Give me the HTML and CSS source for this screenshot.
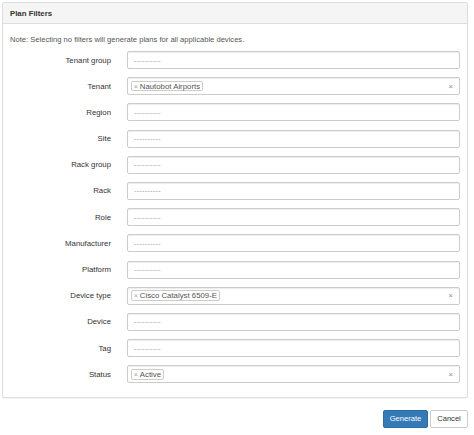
FILE: index.html
```html
<!DOCTYPE html>
<html>
<head>
<meta charset="utf-8">
<link rel="stylesheet" href="styles.css">
</head>
<body>
<div class="page">
  <div class="panel">
    <div class="panel-heading">Plan Filters</div>
    <div class="panel-body">
      <p class="note">Note: Selecting no filters will generate plans for all applicable devices.</p>
      <div class="form">
        <div class="row"><label>Tenant group</label><div class="control"><span class="ph">----------</span></div></div>
        <div class="row"><label>Tenant</label><div class="control"><span class="chip"><span class="x">×</span>Nautobot Airports</span><span class="clear">×</span></div></div>
        <div class="row"><label>Region</label><div class="control"><span class="ph">----------</span></div></div>
        <div class="row"><label>Site</label><div class="control"><span class="ph">----------</span></div></div>
        <div class="row"><label>Rack group</label><div class="control"><span class="ph">----------</span></div></div>
        <div class="row"><label>Rack</label><div class="control"><span class="ph">----------</span></div></div>
        <div class="row"><label>Role</label><div class="control"><span class="ph">----------</span></div></div>
        <div class="row"><label>Manufacturer</label><div class="control"><span class="ph">----------</span></div></div>
        <div class="row"><label>Platform</label><div class="control"><span class="ph">----------</span></div></div>
        <div class="row"><label>Device type</label><div class="control"><span class="chip"><span class="x">×</span>Cisco Catalyst 6509-E</span><span class="clear">×</span></div></div>
        <div class="row"><label>Device</label><div class="control"><span class="ph">----------</span></div></div>
        <div class="row"><label>Tag</label><div class="control"><span class="ph">----------</span></div></div>
        <div class="row"><label>Status</label><div class="control"><span class="chip"><span class="x">×</span>Active</span><span class="clear">×</span></div></div>
      </div>
    </div>
  </div>
  <div class="actions">
    <button class="btn btn-primary">Generate</button>
    <button class="btn btn-default">Cancel</button>
  </div>
</div>
</body>
</html>
```
FILE: styles.css
```css
html, body {
  margin: 0;
  padding: 0;
  background: #fff;
}
body {
  font-family: "Liberation Sans", Arial, Helvetica, sans-serif;
  font-size: 7.8px;
  color: #333;
}
.page {
  padding: 2px 6px 0 2px;
}
.panel {
  border: 1px solid #ddd;
  border-radius: 2px;
  box-shadow: 0 1px 1px rgba(0,0,0,0.05);
}
.panel-heading {
  background: #f5f5f5;
  border-bottom: 1px solid #ddd;
  height: 20px;
  line-height: 21px;
  padding: 0 7px;
  font-weight: bold;
  color: #333;
}
.panel-body {
  padding: 10px 7px 14px 7px;
}
.note {
  margin: 1px 0 0 0;
  height: 10px;
  line-height: 10px;
  font-size: 7.6px;
  color: #555;
}
.form {
  display: flex;
  flex-direction: column;
  gap: 8.2px;
  margin-top: 6px;
}
.row {
  display: grid;
  grid-template-columns: 101px 1fr;
  column-gap: 16px;
  align-items: center;
}
.row label {
  text-align: right;
  color: #333;
}
.control {
  height: 18px;
  box-sizing: border-box;
  border: 1px solid #ccc;
  border-radius: 2px;
  box-shadow: inset 0 1px 1px rgba(0,0,0,0.075);
  display: flex;
  align-items: center;
  padding: 0 3px 0 3px;
  position: relative;
}
.ph {
  color: #aaa;
  font-size: 8px;
  padding-left: 3px;
}
.chip {
  display: inline-flex;
  align-items: center;
  height: 10.5px;
  box-sizing: border-box;
  border: 1px solid #ccc;
  border-radius: 2px;
  background: #fff;
  padding: 0 2px;
  color: #555;
}
.chip .x {
  color: #999;
  font-size: 6.5px;
  margin-right: 2px;
}
.clear {
  margin-left: auto;
  color: #888;
  font-size: 7.5px;
  padding-right: 3px;
}
.actions {
  display: flex;
  justify-content: flex-end;
  gap: 2px;
  margin-top: 12px;
}
.btn {
  font-family: inherit;
  font-size: 7.6px;
  height: 18px;
  box-sizing: border-box;
  border-radius: 2px;
  padding: 0 4px;
  margin: 0;
  line-height: 16px;
}
.btn-primary {
  background: #337ab7;
  border: 1px solid #2e6da4;
  color: #fff;
  width: 45px;
}
.btn-default {
  background: #fff;
  border: 1px solid #ccc;
  color: #333;
  width: 38px;
}
```
